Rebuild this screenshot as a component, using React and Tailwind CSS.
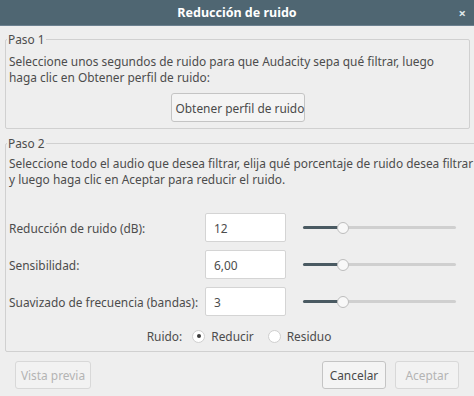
import React from 'react';

const font = { fontFamily: '"Noto Sans", "Open Sans", sans-serif' };

const Slider = () => (
  <div className="relative flex items-center w-[153px] h-[14px]">
    <div className="h-[3px] w-full bg-[#cfcfcf] rounded-full" />
    <div className="absolute left-0 h-[3px] w-[36px] bg-[#4a5a62] rounded-full" />
    <div className="absolute left-[34px] w-[12px] h-[12px] rounded-full bg-[#f8f8f8] border border-[#bdbdbd]" />
  </div>
);

const Row = ({ label, value }) => (
  <div className="flex items-center h-[29px]">
    <div className="w-[196px] whitespace-nowrap">{label}</div>
    <div className="w-[81px] h-[29px] bg-white border border-[#d4d4d4] rounded-[2px] flex items-center px-[8px]">
      {value}
    </div>
    <div className="ml-[17px]">
      <Slider />
    </div>
  </div>
);

const Button = ({ children, disabled, className = '' }) => (
  <button
    className={`h-[28px] px-[4px] rounded-[3px] border whitespace-nowrap ${
      disabled
        ? 'border-[#d8d8d8] bg-[#f2f2f2] text-[#b4b4b4]'
        : 'border-[#c4c4c4] bg-[#f4f4f4] text-[#4a4a4a]'
    } ${className}`}
  >
    {children}
  </button>
);

export default function App() {
  return (
    <div className="w-[474px] h-[396px] bg-[#eeeeee] text-[#4c4c4c] text-[11.9px] leading-[16px] overflow-hidden" style={font}>
      {/* title bar */}
      <div className="h-[26px] bg-[#4f6672] border-b border-[#6c8190] flex items-center justify-center relative">
        <span className="text-white font-bold text-[12.5px]">Reducción de ruido</span>
        <span className="absolute right-[8px] top-[5px] text-[#dfe6ea] text-[13px] font-bold">×</span>
      </div>

      {/* Paso 1 */}
      <fieldset className="mt-[5px] ml-[5px] mr-[4px] border border-[#d0d0d0] rounded-[2px] p-0">
        <legend className="px-[1px] ml-[1px]">Paso 1</legend>
        <div className="px-[3px] pt-[6px] pb-[6px] whitespace-nowrap">
          <p>Seleccione unos segundos de ruido para que Audacity sepa qué filtrar, luego</p>
          <p>haga clic en Obtener perfil de ruido:</p>
          <div className="flex justify-center mt-[8px]">
            <Button className="w-[134px] h-[29px]">Obtener perfil de ruido</Button>
          </div>
        </div>
      </fieldset>

      {/* Paso 2 */}
      <fieldset className="mt-[6px] ml-[5px] mr-[4px] border border-[#d0d0d0] rounded-[2px] p-0">
        <legend className="px-[1px] ml-[1px]">Paso 2</legend>
        <div className="px-[3px] pt-[4px] pb-[6px]">
          <p className="whitespace-nowrap">Seleccione todo el audio que desea filtrar, elija qué porcentaje de ruido desea filtrar</p>
          <p className="whitespace-nowrap">y luego haga clic en Aceptar para reducir el ruido.</p>
          <div className="flex flex-col gap-[8px] mt-[26px]">
            <Row label="Reducción de ruido (dB):" value="12" />
            <Row label="Sensibilidad:" value="6,00" />
            <Row label="Suavizado de frecuencia (bandas):" value="3" />
          </div>
          <div className="flex items-center justify-center mt-[11px] h-[18px] gap-[6px] ml-[-4px]">
            <span>Ruido:</span>
            <span className="ml-[4px] w-[13px] h-[13px] rounded-full bg-white border border-[#cfcfcf] flex items-center justify-center">
              <span className="w-[4px] h-[4px] rounded-full bg-[#3c3c3c]" />
            </span>
            <span>Reducir</span>
            <span className="ml-[8px] w-[13px] h-[13px] rounded-full bg-white border border-[#cfcfcf]" />
            <span>Residuo</span>
          </div>
        </div>
      </fieldset>

      {/* footer */}
      <div className="flex items-center mt-[9px] px-[15px]">
        <Button disabled className="w-[76px]">Vista previa</Button>
        <div className="flex-1" />
        <Button className="w-[64px]">Cancelar</Button>
        <Button disabled className="w-[64px] ml-[9px]">Aceptar</Button>
      </div>
    </div>
  );
}
